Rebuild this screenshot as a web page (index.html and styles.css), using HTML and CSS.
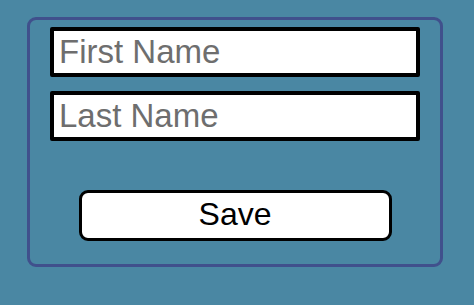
FILE: index.html
```html
<!DOCTYPE html>
<html>
<head>
<meta charset="utf-8">
<link rel="stylesheet" href="styles.css">
</head>
<body>
<form class="card">
  <input class="field" type="text" placeholder="First Name">
  <input class="field field-last" type="text" placeholder="Last Name">
  <button class="save" type="button">Save</button>
</form>
</body>
</html>
```
FILE: styles.css
```css
html, body {
  margin: 0;
  padding: 0;
  background: #4a87a3;
  width: 474px;
  height: 305px;
  overflow: hidden;
}
body {
  padding: 17px 0 0 27px;
  box-sizing: border-box;
  font-family: "Liberation Sans", Arial, sans-serif;
}
.card {
  box-sizing: border-box;
  width: 416px;
  height: 250px;
  margin: 0;
  border: 3px solid #40508c;
  border-radius: 9px;
  padding: 7px 0 0 0;
  display: flex;
  flex-direction: column;
  align-items: center;
}
.field {
  box-sizing: border-box;
  width: 370px;
  height: 50px;
  margin: 0;
  border: 4px solid #000;
  border-radius: 2px;
  background: #fff;
  padding: 0 0 1px 5px;
  font-family: "Liberation Sans", Arial, sans-serif;
  font-size: 33px;
  color: #6e6e6e;
  outline: none;
}
.field::placeholder {
  color: #6e6e6e;
  opacity: 1;
}
.field-last {
  margin-top: 14px;
}
.save {
  box-sizing: border-box;
  margin-top: 49px;
  width: 313px;
  height: 51px;
  border: 3px solid #000;
  border-radius: 9px;
  background: #fff;
  color: #000;
  font-family: "Liberation Sans", Arial, sans-serif;
  font-size: 32px;
  padding: 0 0 3px 0;
}
```
